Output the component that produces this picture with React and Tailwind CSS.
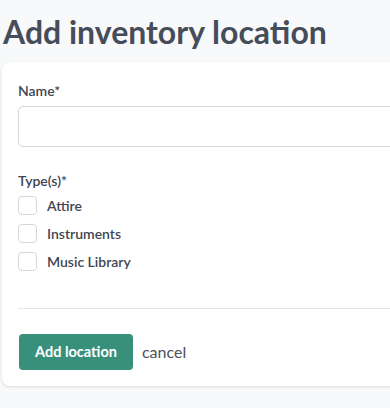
import React from 'react';

const types = ['Attire', 'Instruments', 'Music Library'];

const App = () => {
    return (
        <div className="min-h-[408px] w-[390px] overflow-hidden bg-[#f8f9fb] text-[#3f4652]" style={{ fontFamily: 'Lato, "Open Sans", sans-serif' }}>
            <h1 className="pl-[3px] pt-[14px] text-[32px] font-bold leading-[36px] text-[#464d5a]">Add inventory location</h1>

            {/* Form card */}
            <div className="ml-[2px] mt-[12px] w-[430px] rounded-lg bg-white px-4 pt-[19px] pb-4 shadow-[0_1px_3px_rgba(0,0,0,0.12)]">
                <label className="block text-[14px] font-semibold leading-[20px]">Name*</label>
                <input type="text" className="mt-[5px] block h-[41px] w-full rounded-[5px] border border-[#d4d7de] bg-white" />

                <div className="mt-[24px] text-[14px] font-semibold leading-[20px]">Type(s)*</div>
                <div className="mt-[5px] flex flex-col gap-[9px]">
                    {types.map(t => (
                        <label key={t} className="flex items-center gap-[10px] text-[14px] font-semibold leading-[19px]">
                            <span className="block h-[19px] w-[19px] rounded-[4px] border border-[#d4d7de] bg-white"></span>
                            {t}
                        </label>
                    ))}
                </div>

                <hr className="mt-[37px] border-t border-[#e3e5ea]" />

                <div className="mt-[25px] flex items-center gap-[9px]">
                    <button className="ml-px h-[36px] rounded-[4px] bg-[#38907a] px-4 text-[14.5px] font-bold text-white">Add location</button>
                    <a className="text-[16px] text-[#4a5160]">cancel</a>
                </div>
            </div>
        </div>
    );
};

export default App;
